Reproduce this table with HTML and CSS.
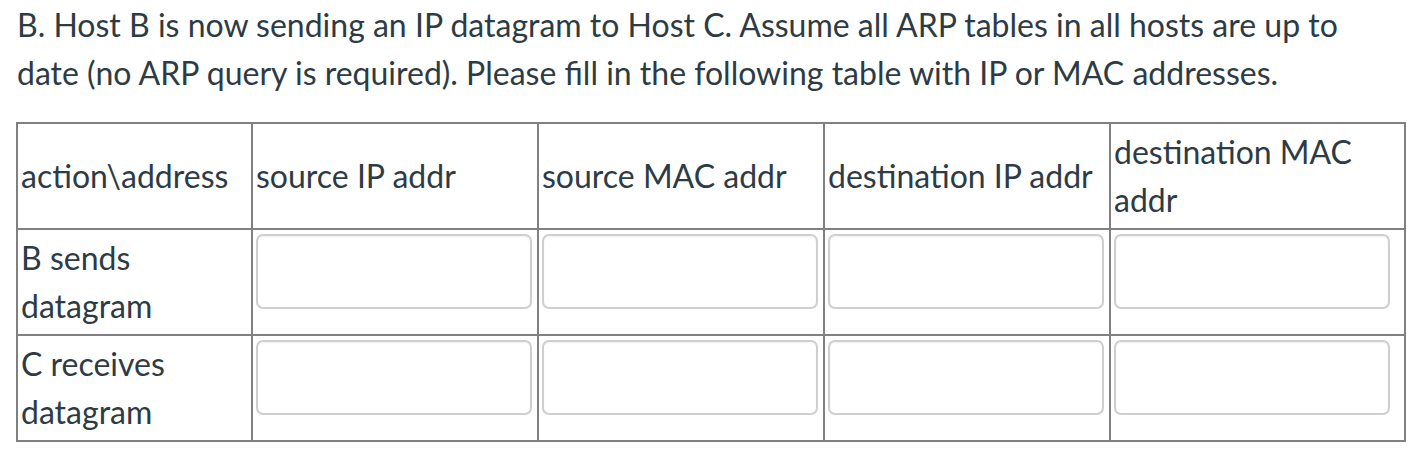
FILE: index.html
```html
<!DOCTYPE html>
<html>
<head>
<meta charset="utf-8">
<link rel="stylesheet" href="styles.css">
</head>
<body>
<div class="page">
  <p class="question">B. Host B is now sending an IP datagram to Host C. Assume all ARP tables in all hosts are up to date (no ARP query is required). Please fill in the following table with IP or MAC addresses.</p>
  <table class="grid">
    <colgroup>
      <col class="c-action">
      <col class="c-mid">
      <col class="c-mid">
      <col class="c-mid">
      <col class="c-last">
    </colgroup>
    <tr class="head">
      <td>action\address</td>
      <td>source IP addr</td>
      <td>source MAC addr</td>
      <td>destination IP addr</td>
      <td>destination MAC addr</td>
    </tr>
    <tr class="row">
      <td class="label">B sends datagram</td>
      <td class="field"><input class="box" type="text"></td>
      <td class="field"><input class="box" type="text"></td>
      <td class="field"><input class="box" type="text"></td>
      <td class="field"><input class="box" type="text"></td>
    </tr>
    <tr class="row">
      <td class="label">C receives datagram</td>
      <td class="field"><input class="box" type="text"></td>
      <td class="field"><input class="box" type="text"></td>
      <td class="field"><input class="box" type="text"></td>
      <td class="field"><input class="box" type="text"></td>
    </tr>
  </table>
</div>
</body>
</html>
```

FILE: styles.css
```css
html, body {
  margin: 0;
  padding: 0;
  background: #ffffff;
}

body {
  font-family: Lato, "Liberation Sans", sans-serif;
  font-size: 32px;
  line-height: 48px;
  color: #2d3b45;
}

.page {
  padding: 1px 12px 0 16px;
}

.question {
  margin: 0 0 25px 1px;
}

.grid {
  border-collapse: collapse;
  table-layout: fixed;
  width: 1388px;
}

.c-action { width: 235px; }
.c-mid { width: 286px; }
.c-last { width: 295px; }

.grid td {
  border: 2px solid #808080;
  padding: 0 3px;
  vertical-align: middle;
  height: 106px;
  box-sizing: border-box;
}

.grid td.field {
  vertical-align: top;
  padding-top: 4px;
}

.box {
  display: block;
  box-sizing: border-box;
  width: 276px;
  height: 75px;
  margin: 0;
  border: 2px solid #cfcfcf;
  border-radius: 7px;
  background: #ffffff;
  box-shadow: inset 0 1px 2px rgba(0, 0, 0, 0.06);
  font: inherit;
}
```
